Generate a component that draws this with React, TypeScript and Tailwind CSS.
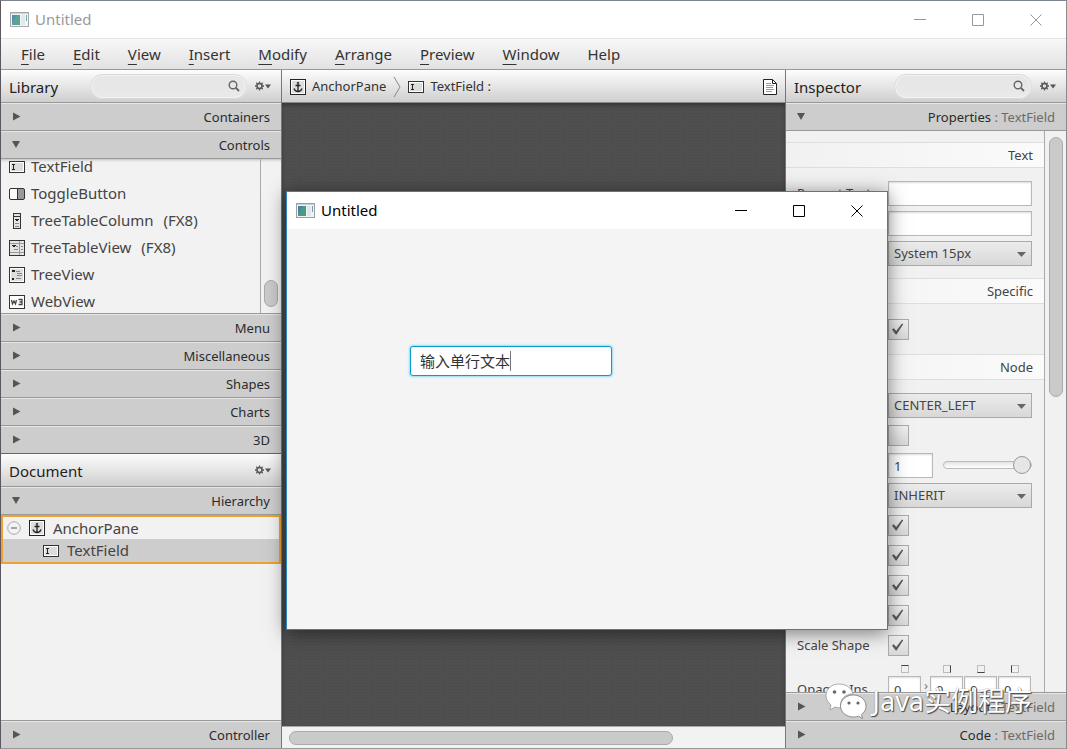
import React, { useState } from "react";
import clsx from "clsx";

type IconName =
  | "textfield"
  | "toggle"
  | "treecolumn"
  | "treetable"
  | "treeview"
  | "webview"
  | "anchor";

interface LibraryItem {
  icon: IconName;
  label: string;
  suffix?: string;
}

const menus = [
  { label: "File", mnemonic: true },
  { label: "Edit", mnemonic: true },
  { label: "View", mnemonic: true },
  { label: "Insert", mnemonic: true },
  { label: "Modify", mnemonic: true },
  { label: "Arrange", mnemonic: true },
  { label: "Preview", mnemonic: true },
  { label: "Window", mnemonic: true },
  { label: "Help", mnemonic: false },
];

const controls: LibraryItem[] = [
  { icon: "textfield", label: "TextField" },
  { icon: "toggle", label: "ToggleButton" },
  { icon: "treecolumn", label: "TreeTableColumn", suffix: "(FX8)" },
  { icon: "treetable", label: "TreeTableView", suffix: "(FX8)" },
  { icon: "treeview", label: "TreeView" },
  { icon: "webview", label: "WebView" },
];

const nodeChecks = ["Visible", "Focus Traversable", "Cache Shape", "Center Shape"];

const Icon: React.FC<{ name: IconName }> = ({ name }) => {
  const common = {
    width: 16,
    height: 16,
    viewBox: "0 0 16 16",
    fill: "none",
    className: "shrink-0",
    shapeRendering: "crispEdges" as const,
  };
  switch (name) {
    case "textfield":
      return (
        <svg {...common}>
          <rect x="0.5" y="2.5" width="15" height="11" fill="#fff" stroke="#333" />
          <rect x="2" y="4" width="12" height="8" fill="#dcdcdc" />
          <path d="M3 5.5h3M4.5 5v6M3 10.5h3" stroke="#222" />
        </svg>
      );
    case "toggle":
      return (
        <svg {...common} shapeRendering="auto">
          <rect x="0.5" y="2.5" width="15" height="11" rx="1.5" fill="#fff" />
          <path d="M8.5 3H15V13H8.5Z" fill="#999" />
          <rect x="0.5" y="2.5" width="15" height="11" rx="1.5" stroke="#333" />
          <path d="M8.5 3v10" stroke="#333" />
        </svg>
      );
    case "treecolumn":
      return (
        <svg {...common}>
          <rect x="4.5" y="0.5" width="7" height="15" fill="#e4e4e4" stroke="#333" />
          <path d="M5 3.5h6" stroke="#333" />
          <path d="M6 6h4L8 9z" fill="#222" />
          <path d="M6 10.5h4M6 13.5h4" stroke="#888" />
        </svg>
      );
    case "treetable":
      return (
        <svg {...common}>
          <rect x="0.5" y="0.5" width="15" height="15" fill="#e4e4e4" stroke="#333" />
          <path d="M1 3.5h14M1 12.5h14M10.5 1v14" stroke="#999" />
          <path d="M3 5h4L5 8z" fill="#222" />
          <path d="M7 6.5h2M5 9.5h4M12 6.5h2M12 9.5h2" stroke="#888" />
        </svg>
      );
    case "treeview":
      return (
        <svg {...common}>
          <rect x="0.5" y="0.5" width="15" height="15" fill="#fff" stroke="#333" />
          <rect x="2" y="2" width="12" height="12" fill="#dedede" />
          <path d="M3 3h3v2H3zM3 11h2v2H3z" fill="#222" />
          <path d="M7 4.5h4M8 6.5h5M8 8.5h5M7 11.5h5" stroke="#888" />
        </svg>
      );
    case "webview":
      return (
        <svg {...common}>
          <rect x="0.5" y="1.5" width="15" height="13" fill="#fff" stroke="#333" />
          <path
            d="M2.5 6l1 4 1.5-3 1.5 3 1-4M9.5 5.5h3.500v5H9.5M10.500 8h2.5"
            stroke="#444"
            strokeWidth="1.3"
            shapeRendering="auto"
          />
        </svg>
      );
    case "anchor":
      return (
        <svg {...common}>
          <rect x="0.5" y="0.5" width="15" height="15" fill="#fff" stroke="#222" />
          <rect x="2" y="2" width="12" height="12" fill="#dedede" />
          <g shapeRendering="auto" stroke="#222">
            <circle cx="8" cy="4" r="0.8" />
            <path d="M8 5v7.500M5.500 6.500h5M4 9.500q1 3 4 3t4-3" strokeWidth="1.3" />
          </g>
        </svg>
      );
  }
};

const AppIcon: React.FC<{ faded?: boolean }> = ({ faded }) => (
  <svg
    width="19"
    height="15"
    viewBox="0 0 19 15"
    fill="none"
    className={clsx("shrink-0", faded ? "opacity-90" : "opacity-100")}
  >
    <rect x="0.5" y="0.5" width="18" height="14" fill="#f1f4f4" stroke="#9aa0a4" />
    <path d="M1 1.5h17" stroke="#c9ced2" />
    <rect x="2" y="3" width="8" height="10" fill="#4b9a86" />
    <path d="M2 3h5l-5 8z" fill="#4583a0" />
    <rect x="11" y="3" width="4" height="10" fill="#e3e6e6" />
    <path d="M16.5 3v6" stroke="#6a9fb5" />
  </svg>
);

const WindowButtons: React.FC = () => (
  <div className="ml-auto flex h-full pr-px">
    {[
      { label: "Minimize", d: "M0 5.5h12" },
      { label: "Maximize", d: "M0.5 0.5h11v11h-11z" },
      { label: "Close", d: "M0.5 0.5l11 11M11.5 0.5l-11 11" },
    ].map((b) => (
      <button
        key={b.label}
        aria-label={b.label}
        className="flex w-[58px] items-center justify-center"
      >
        <svg width="12" height="12" viewBox="0 0 12 12" fill="none" stroke="currentColor">
          <path d={b.d} />
        </svg>
      </button>
    ))}
  </div>
);

const GearMenu: React.FC<{ label: string }> = ({ label }) => (
  <button aria-label={label} className="shrink-0 text-[#555]">
    <svg width="16" height="10" viewBox="0 0 16 10" fill="none">
      <circle cx="4.5" cy="5" r="2.5" stroke="currentColor" strokeWidth="1.6" />
      <path
        d="M4.5 0.5v1.5M4.5 8v1.5M0 5h1.5M7.5 5h1.5M1.3 1.8l1 1M6.7 7.2l1 1M7.7 1.8l-1 1M2.3 7.2l-1 1"
        stroke="currentColor"
        strokeWidth="1.3"
      />
      <path d="M10 3.5h6l-3 4z" fill="currentColor" />
    </svg>
  </button>
);

const SearchBox: React.FC<{ label: string; className: string }> = ({ label, className }) => (
  <div
    className={clsx(
      "flex h-[25px] items-center rounded-full border-2 border-[#f3f3f3] bg-gradient-to-b from-[#e6e6e6] to-[#e9e9e9] pr-[5px] outline outline-1 -outline-offset-1 outline-[#d8d8d8]",
      className
    )}
  >
    <input aria-label={label} className="min-w-0 flex-1 bg-transparent pl-2 text-[13px] outline-none" />
    <svg width="12" height="12" viewBox="0 0 12 12" fill="none" stroke="#666" strokeWidth="1.4">
      <circle cx="5" cy="5" r="3.8" />
      <path d="M8 8l3 3" strokeWidth="1.8" />
    </svg>
  </div>
);

const PanelHeader: React.FC<{ title: string; searchClass?: string }> = ({ title, searchClass }) => (
  <div className="flex h-[33px] shrink-0 items-center gap-2 border-b border-[#999] bg-gradient-to-b from-[#fdfdfd] to-[#cfcfcf] pr-[10px] pl-2">
    <h2 className="mr-auto pt-[2px] text-[15px] text-[#222]">{title}</h2>
    {searchClass && <SearchBox label={`Search ${title}`} className={searchClass} />}
    <GearMenu label={`${title} menu`} />
  </div>
);

const SectionBar: React.FC<{
  title: string;
  detail?: string;
  open?: boolean;
  top?: boolean;
  dark?: boolean;
}> = ({ title, detail, open, top, dark }) => (
  <button
    aria-expanded={!!open}
    className={clsx(
      "flex h-7 w-full shrink-0 items-center justify-between bg-[#cdcdcd] px-[11px] text-[13px] text-[#2b2b2b] shadow-[inset_0_1px_0_#e6e6e6]",
      top ? "border-t" : "border-b",
      dark ? "border-[#666]" : "border-[#999]"
    )}
  >
    <svg width="9" height="9" viewBox="0 0 9 9" fill="#555">
      {open ? <path d="M0 1h8l-4 7z" /> : <path d="M1 0.5v8l7.5-4z" />}
    </svg>
    <span className="pt-[2px] whitespace-pre">
      {title}
      {detail && <span className="text-[#6b6b6b]"> : {detail}</span>}
    </span>
  </button>
);

const GroupTitle: React.FC<{ children: React.ReactNode }> = ({ children }) => (
  <h3 className="flex h-[26px] items-center justify-end border-y border-[#dedede] bg-gradient-to-r from-[#f1f1f1] to-[#fbfbfb] pt-[2px] pr-[11px] text-[13px] text-[#444]">
    {children}
  </h3>
);

const Row: React.FC<{ label?: string; htmlFor?: string; children: React.ReactNode }> = ({
  label,
  htmlFor,
  children,
}) => (
  <div className="flex h-[30px] items-center">
    <label htmlFor={htmlFor} className="w-[91px] shrink-0 pt-[2px] text-[13px] text-[#444]">
      {label}
    </label>
    <div className="flex min-w-0 flex-1 items-center">{children}</div>
  </div>
);

const fieldClass =
  "h-[25px] border border-[#b8b8b8] bg-white px-[5px] pt-[2px] text-[13px] text-[#444] shadow-[inset_0_1px_2px_#ddd] outline-none";

const SelectBox: React.FC<{ label: string; value: string }> = ({ label, value }) => (
  <div className="relative w-full">
    <select
      aria-label={label}
      defaultValue={value}
      className="block h-[25px] w-full appearance-none border border-[#aaa] bg-gradient-to-b from-[#ececec] to-[#d8d8d8] px-[5px] pt-[2px] text-[13px] text-[#444]"
    >
      <option>{value}</option>
    </select>
    <svg
      width="9"
      height="5"
      viewBox="0 0 9 5"
      fill="#666"
      className="pointer-events-none absolute top-[11px] right-[6px]"
    >
      <path d="M0 0h9l-4.5 5z" />
    </svg>
  </div>
);

const CheckBox: React.FC<{ id?: string; label?: string; defaultChecked?: boolean }> = ({
  id,
  label,
  defaultChecked,
}) => (
  <span className="relative flex">
    <input
      id={id}
      type="checkbox"
      aria-label={label}
      defaultChecked={defaultChecked}
      className="peer size-[21px] appearance-none border border-[#aaa] bg-gradient-to-b from-[#f0f0f0] to-[#d8d8d8]"
    />
    <svg
      width="12"
      height="12"
      viewBox="0 0 12 12"
      fill="#5a5a5a"
      className="pointer-events-none absolute top-[4px] left-[4px] hidden peer-checked:block"
    >
      <path d="M0 6.5L1.8 5.2 4.2 8 10 0.5 11.2 1.3 4.6 11.5H3.7z" />
    </svg>
  </span>
);

const LibraryPanel: React.FC = () => (
  <>
    <PanelHeader title="Library" searchClass="w-[157px]" />
    <SectionBar title="Containers" />
    <SectionBar title="Controls" open />
    <div className="flex h-[155px] shrink-0 overflow-hidden border-b border-[#999] bg-[#f2f2f2] shadow-[inset_0_3px_3px_-2px_#bbb]">
      <ul className="-mt-[6px] flex-1">
        {controls.map((item) => (
          <li
            key={item.label}
            className="flex h-[27px] items-center gap-[6px] pl-2 text-[15px] text-[#444]"
          >
            <Icon name={item.icon} />
            <span>{item.label}</span>
            {item.suffix && <span className="ml-1">{item.suffix}</span>}
          </li>
        ))}
      </ul>
      <div className="flex w-[21px] items-end justify-center border-l border-[#aaa] pb-[6px]">
        <div className="h-[27px] w-[14px] rounded-full border border-[#aaa] bg-[#cacaca]" />
      </div>
    </div>
    <SectionBar title="Menu" />
    <SectionBar title="Miscellaneous" />
    <SectionBar title="Shapes" />
    <SectionBar title="Charts" />
    <SectionBar title="3D" dark />
  </>
);

const DocumentPanel: React.FC = () => (
  <>
    <PanelHeader title="Document" />
    <SectionBar title="Hierarchy" open />
    <div className="flex-1 bg-[#f2f2f2]">
      <ul className="border-2 border-[#efa22f] text-[15px] text-[#444]">
        <li className="flex h-[22px] items-center pl-1">
          <svg width="14" height="14" viewBox="0 0 14 14" fill="none" stroke="#aaa">
            <circle cx="7" cy="7" r="6.3" />
            <path d="M4 7h6" stroke="#888" strokeWidth="1.5" />
          </svg>
          <span className="ml-2 flex items-center gap-2">
            <Icon name="anchor" />
            AnchorPane
          </span>
        </li>
        <li className="flex h-[23px] items-center gap-2 bg-[#cdcdcd] pl-10">
          <Icon name="textfield" />
          TextField
        </li>
      </ul>
    </div>
    <SectionBar title="Controller" top />
  </>
);

const Editor: React.FC = () => (
  <main className="flex min-w-0 flex-1 flex-col">
    <nav className="flex h-[33px] shrink-0 items-center border-b border-[#888] bg-gradient-to-b from-[#fdfdfd] to-[#cfcfcf] px-2 pt-[2px] text-[13px] text-[#333]">
      <Icon name="anchor" />
      <a href="#anchor-pane" className="ml-[6px]">
        AnchorPane
      </a>
      <svg width="8" height="22" viewBox="0 0 8 22" fill="none" stroke="#888" className="mx-[7px]">
        <path d="M1 1l6 10-6 10" />
      </svg>
      <Icon name="textfield" />
      <a href="#text-field" className="ml-[6px]">
        TextField :
      </a>
      <button aria-label="Show source" className="ml-auto">
        <svg width="14" height="16" viewBox="0 0 14 16" fill="none">
          <path d="M0.5 0.5h9l4 4v11h-13z" fill="#fff" stroke="#222" />
          <path d="M9.5 0.5v4h4" stroke="#222" />
          <path d="M3 4.5h5M3 6.5h8M3 8.5h7M3 10.5h8M3 12.5h6" stroke="#999" />
        </svg>
      </button>
    </nav>
    <div className="flex-1 bg-[#4f4f4f] bg-[radial-gradient(#494949_1px,transparent_1px)] bg-[length:3px_3px] shadow-[inset_0_3px_4px_-1px_#333]" />
    <div className="flex h-[22px] shrink-0 items-center border-t border-[#aaa] bg-[#f2f2f2] px-[7px]">
      <div className="h-[14px] w-[78.5%] rounded-full border border-[#aaa] bg-[#cacaca]" />
    </div>
  </main>
);

const InsetField: React.FC<{ id?: string; label?: string; side: string }> = ({ id, label, side }) => (
  <div className="mr-px flex flex-col items-center gap-[3px]">
    <span className={clsx("size-2 border border-[#bbb]", side)} />
    <input id={id} aria-label={label} defaultValue="0" className={clsx(fieldClass, "w-[33px]")} />
  </div>
);

const Inspector: React.FC = () => (
  <aside className="flex w-[281px] shrink-0 flex-col border-l border-[#777]">
    <PanelHeader title="Inspector" searchClass="w-[138px]" />
    <SectionBar title="Properties" detail="TextField" open />
    <div className="flex min-h-0 flex-1 overflow-hidden bg-[#f1f1f1]">
      <div className="min-w-0 flex-1 pt-[11px]">
        <GroupTitle>Text</GroupTitle>
        <div className="py-[10px] pr-3 pl-[11px]">
          <Row label="Prompt Text" htmlFor="prompt-text">
            <input id="prompt-text" className={clsx(fieldClass, "w-full")} />
          </Row>
          <Row>
            <input aria-label="Text" className={clsx(fieldClass, "w-full")} />
          </Row>
          <Row>
            <SelectBox label="Font" value="System 15px" />
          </Row>
        </div>
        <GroupTitle>Specific</GroupTitle>
        <div className="py-[10px] pr-3 pl-[11px]">
          <Row>
            <CheckBox label="Editable" defaultChecked />
          </Row>
        </div>
        <GroupTitle>Node</GroupTitle>
        <div className="pt-[10px] pr-3 pl-[11px]">
          <Row>
            <SelectBox label="Alignment" value="CENTER_LEFT" />
          </Row>
          <Row>
            <CheckBox label="Disable" />
          </Row>
          <Row>
            <input aria-label="Opacity value" defaultValue="1" className={clsx(fieldClass, "w-[45px]")} />
            <input
              type="range"
              aria-label="Opacity"
              defaultValue={100}
              className="ml-[10px] h-2 min-w-0 flex-1 appearance-none rounded-full border border-[#bbb] bg-gradient-to-b from-[#e4e4e4] to-white [&::-webkit-slider-thumb]:size-[18px] [&::-webkit-slider-thumb]:appearance-none [&::-webkit-slider-thumb]:rounded-full [&::-webkit-slider-thumb]:border [&::-webkit-slider-thumb]:border-[#999] [&::-webkit-slider-thumb]:bg-[#e6e6e6]"
            />
          </Row>
          <Row>
            <SelectBox label="Node Orientation" value="INHERIT" />
          </Row>
          {nodeChecks.map((name) => (
            <Row key={name}>
              <CheckBox label={name} defaultChecked />
            </Row>
          ))}
          <Row label="Scale Shape" htmlFor="scale-shape">
            <CheckBox id="scale-shape" defaultChecked />
          </Row>
          <div className="flex items-end pt-[5px]">
            <label
              htmlFor="inset-top"
              className="flex h-[25px] w-[91px] shrink-0 items-center pt-[2px] text-[13px] whitespace-nowrap text-[#444]"
            >
              Opaque Ins
            </label>
            <InsetField id="inset-top" side="border-t-[#444]" />
            <span className="h-[25px] w-[9px] text-center text-[13px] text-[#777]">›</span>
            <InsetField label="Right inset" side="border-r-[#444]" />
            <InsetField label="Bottom inset" side="border-b-[#444]" />
            <InsetField label="Left inset" side="border-l-[#444]" />
          </div>
        </div>
      </div>
      <div className="flex w-[22px] shrink-0 justify-center border-l border-[#aaa] pt-[6px]">
        <div className="h-[260px] w-[14px] rounded-full border border-[#aaa] bg-[#cacaca]" />
      </div>
    </div>
    <SectionBar title="Layout" detail="TextField" top />
    <SectionBar title="Code" detail="TextField" top />
  </aside>
);

const PreviewWindow: React.FC = () => {
  const [text, setText] = useState("输入单行文本");

  return (
    <section className="absolute top-[190px] left-[285px] flex h-[439px] w-[602px] flex-col border border-[#2b86c0] bg-[#f4f4f4] shadow-[0_3px_18px_rgba(0,0,0,0.5)]">
      <header className="flex h-[37px] shrink-0 items-center bg-white pl-[9px] text-[15px] text-black">
        <AppIcon />
        <span className="ml-[6px]">Untitled</span>
        <WindowButtons />
      </header>
      <div className="flex-1 pt-[117px] pl-[123px]">
        <div className="relative w-[202px]">
          <input
            aria-label="Text"
            value={text}
            onChange={(e) => setText(e.target.value)}
            className="block h-[30px] w-full rounded-[3px] border border-[#039ed3] bg-white px-[9px] pb-[2px] text-[15px] text-[#333] shadow-[0_0_2px_1px_#9bd9ee] outline-none"
          />
          <span className="absolute top-[5px] left-[100px] h-5 w-px bg-[#777]" />
        </div>
      </div>
    </section>
  );
};

const Watermark: React.FC = () => (
  <div className="pointer-events-none absolute right-[34px] bottom-[29px] flex items-center gap-[6px]">
    <svg width="42" height="36" viewBox="0 0 42 36" fill="none">
      <path
        d="M14 1C6.5 1 1 6 1 12.5c0 4 2 7 5 9.5l-1 5 5-3c2 .7 4 1 6 .8C14 16 21 10.5 28 11 27 5 21 1 14 1z"
        fill="#fff"
        stroke="#999"
        strokeWidth="0.8"
      />
      <path
        d="M28.5 12C21 12 15.5 17 15.5 23s5.5 11 13 11c2 0 3.5-.3 5-.8l4 2.3-1-4c3-2 4.5-5 4.5-8.5 0-6-5.5-11-12.5-11z"
        fill="#fff"
        stroke="#777"
        strokeWidth="0.8"
      />
      <g fill="#666">
        <circle cx="9.5" cy="9" r="1.8" />
        <circle cx="19" cy="9" r="1.8" />
        <circle cx="24" cy="20" r="1.6" />
        <circle cx="33" cy="20" r="1.6" />
      </g>
    </svg>
    <span className="text-[27px] leading-9 text-white [text-shadow:1px_1px_1px_#444,0_0_1px_#777]">
      Java实例程序
    </span>
  </div>
);

const App: React.FC = () => {
  return (
    <div className="relative flex h-screen min-h-[749px] flex-col overflow-hidden border border-t-[#7d8590] border-r-[#8a8a8a] border-b-[#999] border-l-[#5d5560] bg-white font-['Noto_Sans','Noto_Sans_CJK_SC',sans-serif]">
      <header className="flex h-[37px] shrink-0 items-center pl-[9px] text-[15px] text-[#999]">
        <AppIcon faded />
        <h1 className="ml-[6px]">Untitled</h1>
        <WindowButtons />
      </header>

      {/* Menu bar */}
      <nav className="flex h-8 shrink-0 items-center border-t border-b border-t-[#e4e4e4] border-b-[#999] bg-gradient-to-b from-[#f8f8f8] to-[#e2e2e2] pl-[6px] text-[15px] text-[#333]">
        {menus.map((m) => (
          <button key={m.label} className="px-[14px]">
            {m.mnemonic ? (
              <>
                <span className="underline decoration-1 underline-offset-4">{m.label[0]}</span>
                {m.label.slice(1)}
              </>
            ) : (
              m.label
            )}
          </button>
        ))}
      </nav>

      <div className="flex min-h-0 flex-1">
        <aside className="flex w-[281px] shrink-0 flex-col border-r border-[#777]">
          <LibraryPanel />
          <DocumentPanel />
        </aside>
        <Editor />
        <Inspector />
      </div>

      <PreviewWindow />
      <Watermark />
    </div>
  );
};

export default App;
